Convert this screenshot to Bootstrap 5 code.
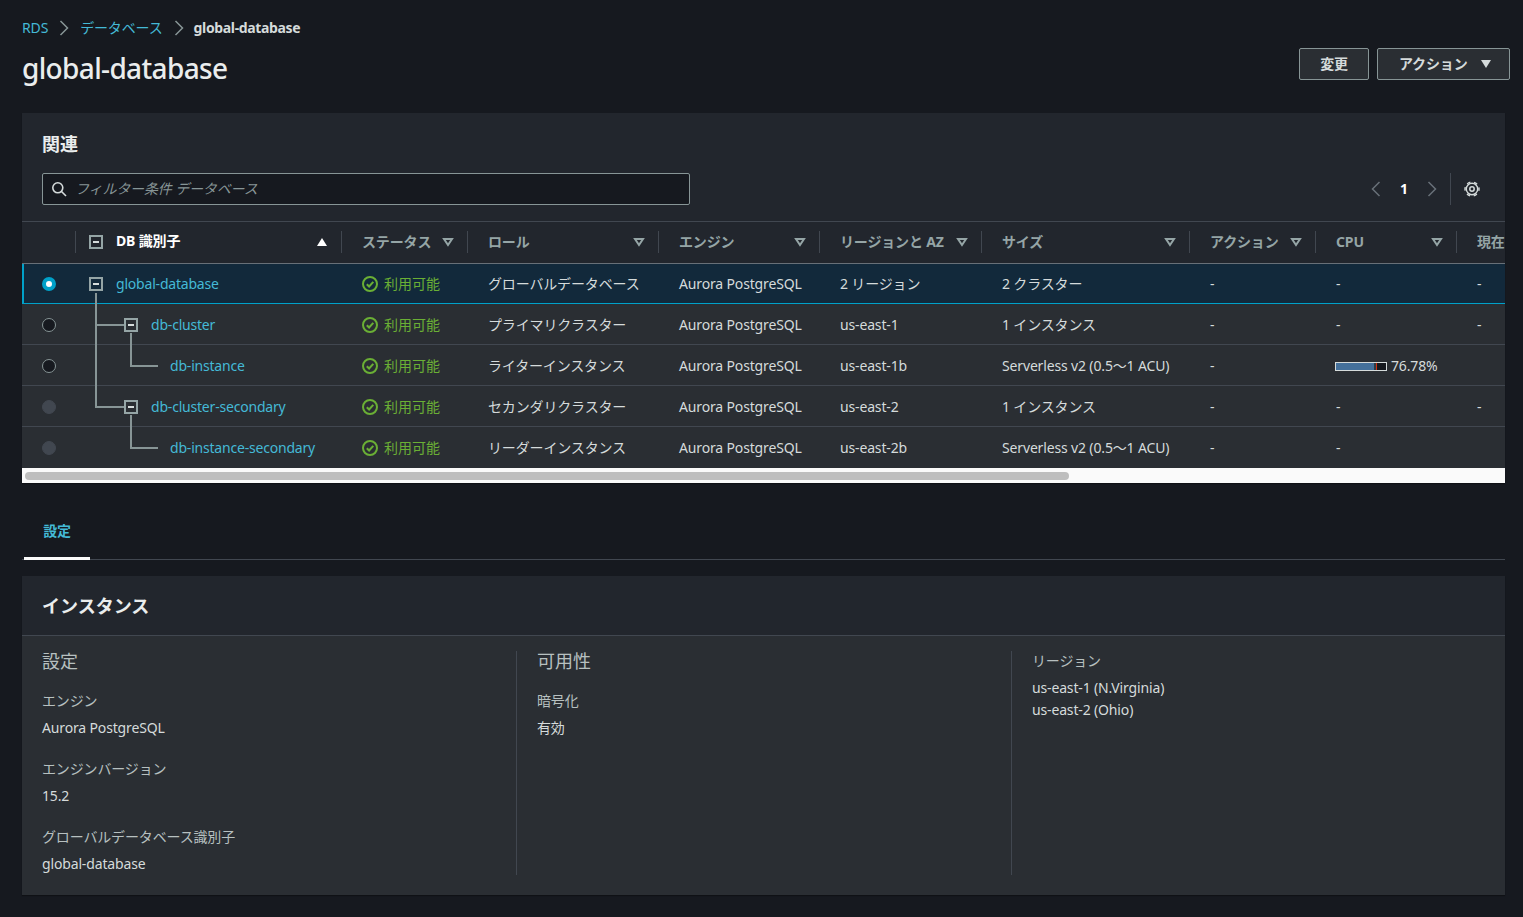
<!DOCTYPE html>
<html lang="ja">
<head>
<meta charset="utf-8">
<title>global-database</title>
<link href="https://cdn.jsdelivr.net/npm/bootstrap@5.3.0/dist/css/bootstrap.min.css" rel="stylesheet">
<style>
html,body{height:100%}
body{background:#16191f;color:#d5dbdb;font-family:"Noto Sans","Noto Sans CJK JP",sans-serif;font-size:14px;line-height:22px;letter-spacing:-.15px;overflow:hidden}
a{color:#44b9d6;text-decoration:none}
.page-wrap{padding:17px 18px 22px 22px}
.crumbs{height:22px}
.crumbs svg{margin:0 11px 0 11px}
.crumb-now{font-weight:700;color:#d5dbdb;letter-spacing:-.35px;margin-left:-1px}
.page-title{font-size:28px;line-height:36px;font-weight:500;letter-spacing:-.65px;color:#eaeded;margin:11px 0 0}
.head-row{margin-right:-5px;height:74px}
.head-btns{gap:8px;margin-top:9px}
.aws-btn{background:#2a2e33;border:1px solid #879596;color:#d5dbdb;font-weight:700;font-size:14px;line-height:22px;height:32px;border-radius:2px;padding:4px 20.5px;letter-spacing:-.15px}
.aws-btn:hover{background:#2a2e33;color:#d5dbdb;border-color:#879596}
.btn-caret{margin-left:11px;margin-right:-4px}
.rel-card{background:#22262d;box-shadow:0 1px 1px rgba(0,0,0,.3)}
.rel-head{padding:20px 20px 16px 20px}
.rel-title{font-size:18px;line-height:22px;font-weight:700;color:#eaeded;margin:0 0 18px;letter-spacing:0}
.filter-box{width:648px;height:32px;border:1px solid #879596;border-radius:2px;background:#16191f;padding-left:8px;gap:8px}
.filter-hint{font-style:italic;color:#879596}
.pager{height:32px;padding-right:5px}
.pager-num{font-weight:700;color:#fff;width:46px;text-align:center}
.pager-sep{width:1px;height:32px;background:#414750;margin:0 13px 0 13px}
.scroll-clip{overflow:hidden;border-top:1px solid #414750}
.res-table{table-layout:fixed;width:1550px;margin:0;border-collapse:collapse;--bs-table-bg:transparent;--bs-table-color:#d5dbdb}
.res-table th{height:41px;padding:0;font-weight:700;color:#95a5a6;background:#22262d;border-bottom:1px solid #687078;vertical-align:middle;white-space:nowrap}
.col-head{height:22px;border-left:1px solid #414750;padding-left:20px;padding-right:13px}
.col-head.act{color:#fff}
.act-label{padding-bottom:2px}
.res-table td{height:41px;padding:2px 0 0 21px;background:#2a2e33;color:#d5dbdb;border-bottom:1px solid #414750;vertical-align:middle;white-space:nowrap;position:relative}
.res-table tr:last-child td{border-bottom:0;height:42px;padding-top:1px}
.res-table tr.picked td{background:#12293b;border-top:1px solid #00a1c9;border-bottom:1px solid #00a1c9;height:40px}
.res-table tr.picked td:first-child{box-shadow:inset 2px 0 0 #00a1c9}
.res-table td.radio-cell{padding-left:20px}
.radio-dot{display:block;width:14px;height:14px;border-radius:50%;border:1px solid #879596;background:#16191f}
.radio-dot.on{background:#fff;border:4px solid #00a1c9}
.radio-dot.off{background:#414750;border-color:#414750}
.res-table td.tree-cell{padding-left:0}
.tree-lines{position:absolute;left:0;top:0;pointer-events:none}
.tree-in{display:flex;align-items:center;position:relative;letter-spacing:-.2px}
.lvl-0{padding-left:14px}.lvl-1{padding-left:49px}.lvl-2{padding-left:95px}
.tree-box{width:14px;height:14px;border:2px solid #95a5a6;flex:none;margin-right:13px;display:flex;align-items:center;justify-content:center}
.tree-box::before{content:"";width:6px;height:2px;background:#d5dbdb}
.head-box{margin-left:-7px}
.status-ok{color:#6aaf35;letter-spacing:0}
.status-ok svg{margin-right:6px;vertical-align:-3px}
.res-table td.cpu-td{padding-left:20px}
.cpu-bar{display:inline-block;width:52px;height:9px;border:1px solid #d5dbdb;position:relative;margin-right:4px;background:#16191f}
.cpu-fill{position:absolute;left:0;top:0;bottom:0;background:#44709b}
.cpu-mark{position:absolute;top:0;bottom:0;left:38px;width:3px;background:#2f3b46;border-right:1px solid #d13212}
.hscroll{height:15px;background:#fafafa;padding:4px 3px}
.hscroll-thumb{width:1044px;height:8px;background:#bebebe;border-radius:4px}
.tab-strip{margin-top:27px;height:50px;border-bottom:1px solid #414750}
.tab-one{display:block;width:66px;height:47px;margin-left:2px;text-align:center;line-height:42px;font-weight:700;color:#44b9d6;border-bottom:3px solid #fafafa;box-sizing:content-box}
.inst-card{margin-top:16px;background:#2a2e33;box-shadow:0 1px 1px rgba(0,0,0,.3)}
.inst-head{background:#22262d;height:60px;padding:0 20px;border-bottom:1px solid #414750;display:flex;align-items:center}
.inst-title{font-size:18px;font-weight:700;line-height:22px;color:#eaeded;margin:0;letter-spacing:0}
.inst-body{padding:15px 0 20px;height:259px}
.inst-col{width:495px;height:224px;padding:0 20px;border-right:1px solid #414750;flex:none}
.inst-col:last-child{border-right:0}
.inst-h{font-size:18px;line-height:22px;font-weight:400;margin:-1px 0 18px;color:#b7c0c0;letter-spacing:0}
.kv-l{color:#b7c0c0;line-height:22px}
.kv-v{color:#d5dbdb;line-height:22px;margin-top:5px;margin-bottom:19px}
.reg-h{color:#b7c0c0;line-height:22px;margin:-1px 0 5px}
</style>
</head>
<body>
<div class="page-wrap">
  <nav class="crumbs d-flex align-items-center">
    <a href="#">RDS</a>
    <svg width="10" height="16" viewBox="0 0 10 16" fill="none" stroke="#879596" stroke-width="1.5"><path d="M1.5 1l7 7-7 7"/></svg>
    <a href="#">データベース</a>
    <svg width="10" height="16" viewBox="0 0 10 16" fill="none" stroke="#879596" stroke-width="1.5"><path d="M1.5 1l7 7-7 7"/></svg>
    <span class="crumb-now">global-database</span>
  </nav>
  <div class="head-row d-flex justify-content-between align-items-start">
    <h1 class="page-title">global-database</h1>
    <div class="head-btns d-flex">
      <button class="btn aws-btn" type="button">変更</button>
      <button class="btn aws-btn d-flex align-items-center" type="button">アクション<svg class="btn-caret" width="14" height="10" viewBox="0 0 14 10"><path d="M2 1h10L7 9z" fill="#d5dbdb"/></svg></button>
    </div>
  </div>

  <section class="rel-card">
    <div class="rel-head">
      <h2 class="rel-title">関連</h2>
      <div class="d-flex justify-content-between align-items-center">
        <div class="filter-box d-flex align-items-center">
          <svg width="16" height="16" viewBox="0 0 16 16" fill="none" stroke="#d5dbdb" stroke-width="1.6"><circle cx="6.8" cy="6.8" r="5"/><path d="M10.5 10.5l4.5 4.5"/></svg>
          <span class="filter-hint">フィルター条件 データベース</span>
        </div>
        <div class="pager d-flex align-items-center">
          <svg width="10" height="16" viewBox="0 0 10 16" fill="none" stroke="#687078" stroke-width="1.5"><path d="M8.5 1l-7 7 7 7"/></svg>
          <span class="pager-num">1</span>
          <svg width="10" height="16" viewBox="0 0 10 16" fill="none" stroke="#687078" stroke-width="1.5"><path d="M1.5 1l7 7-7 7"/></svg>
          <span class="pager-sep"></span>
          <svg width="16" height="16" viewBox="0 0 16 16" fill="none" stroke="#d5dbdb"><circle cx="8" cy="8" r="2.2" stroke-width="1.5"/><circle cx="8" cy="8" r="5.7" stroke-width="1.4"/><circle cx="8" cy="8" r="7" stroke-width="1.4" stroke-dasharray="3.6 3.73" stroke-dashoffset="1.8"/></svg>
        </div>
      </div>
    </div>
    <div class="scroll-clip">
      <table class="table res-table">
        <colgroup><col style="width:53px"><col style="width:266px"><col style="width:126px"><col style="width:191px"><col style="width:161px"><col style="width:162px"><col style="width:208px"><col style="width:126px"><col style="width:141px"><col style="width:116px"></colgroup>
        <thead><tr>
          <th></th>
          <th><div class="col-head act d-flex align-items-center"><span class="tree-box head-box"></span><span class="flex-grow-1 act-label">DB 識別子</span><svg width="12" height="10" viewBox="0 0 12 10"><path d="M6 1l5 8H1z" fill="#fff"/></svg></div></th>
          <th><div class="col-head d-flex align-items-center justify-content-between"><span>ステータス</span><svg width="12" height="10" viewBox="0 0 12 10" fill="none" stroke="#95a5a6" stroke-width="2"><path d="M2 2h8L6 8z"/></svg></div></th>
          <th><div class="col-head d-flex align-items-center justify-content-between"><span>ロール</span><svg width="12" height="10" viewBox="0 0 12 10" fill="none" stroke="#95a5a6" stroke-width="2"><path d="M2 2h8L6 8z"/></svg></div></th>
          <th><div class="col-head d-flex align-items-center justify-content-between"><span>エンジン</span><svg width="12" height="10" viewBox="0 0 12 10" fill="none" stroke="#95a5a6" stroke-width="2"><path d="M2 2h8L6 8z"/></svg></div></th>
          <th><div class="col-head d-flex align-items-center justify-content-between"><span>リージョンと AZ</span><svg width="12" height="10" viewBox="0 0 12 10" fill="none" stroke="#95a5a6" stroke-width="2"><path d="M2 2h8L6 8z"/></svg></div></th>
          <th><div class="col-head d-flex align-items-center justify-content-between"><span>サイズ</span><svg width="12" height="10" viewBox="0 0 12 10" fill="none" stroke="#95a5a6" stroke-width="2"><path d="M2 2h8L6 8z"/></svg></div></th>
          <th><div class="col-head d-flex align-items-center justify-content-between"><span>アクション</span><svg width="12" height="10" viewBox="0 0 12 10" fill="none" stroke="#95a5a6" stroke-width="2"><path d="M2 2h8L6 8z"/></svg></div></th>
          <th><div class="col-head d-flex align-items-center justify-content-between"><span>CPU</span><svg width="12" height="10" viewBox="0 0 12 10" fill="none" stroke="#95a5a6" stroke-width="2"><path d="M2 2h8L6 8z"/></svg></div></th>
          <th><div class="col-head d-flex align-items-center"><span>現在</span></div></th>
        </tr></thead>
        <tbody>
          <tr class="picked">
            <td class="radio-cell"><span class="radio-dot on"></span></td>
            <td class="tree-cell"><svg class="tree-lines" width="120" height="41" fill="none" stroke="#879596" stroke-width="2"><path d="M21 29v13"/></svg><div class="tree-in lvl-0"><span class="tree-box"></span><a href="#">global-database</a></div></td>
            <td><span class="status-ok"><svg width="16" height="16" viewBox="0 0 16 16" fill="none" stroke="#6aaf35" stroke-width="2"><circle cx="8" cy="8" r="7"/><path d="M4.800 8.200l2.300 2.300 4.200-4.600"/></svg>利用可能</span></td>
            <td>グローバルデータベース</td><td>Aurora PostgreSQL</td><td>2 リージョン</td><td>2 クラスター</td><td>-</td><td>-</td><td>-</td>
          </tr>
          <tr>
            <td class="radio-cell"><span class="radio-dot"></span></td>
            <td class="tree-cell"><svg class="tree-lines" width="120" height="41" fill="none" stroke="#879596" stroke-width="2"><path d="M21 0v41M21 21h28M56 29v12"/></svg><div class="tree-in lvl-1"><span class="tree-box"></span><a href="#">db-cluster</a></div></td>
            <td><span class="status-ok"><svg width="16" height="16" viewBox="0 0 16 16" fill="none" stroke="#6aaf35" stroke-width="2"><circle cx="8" cy="8" r="7"/><path d="M4.800 8.200l2.300 2.300 4.200-4.600"/></svg>利用可能</span></td>
            <td>プライマリクラスター</td><td>Aurora PostgreSQL</td><td>us-east-1</td><td>1 インスタンス</td><td>-</td><td>-</td><td>-</td>
          </tr>
          <tr>
            <td class="radio-cell"><span class="radio-dot"></span></td>
            <td class="tree-cell"><svg class="tree-lines" width="120" height="41" fill="none" stroke="#879596" stroke-width="2"><path d="M21 0v41M56 0v21h27"/></svg><div class="tree-in lvl-2"><a href="#">db-instance</a></div></td>
            <td><span class="status-ok"><svg width="16" height="16" viewBox="0 0 16 16" fill="none" stroke="#6aaf35" stroke-width="2"><circle cx="8" cy="8" r="7"/><path d="M4.800 8.200l2.300 2.300 4.200-4.600"/></svg>利用可能</span></td>
            <td>ライターインスタンス</td><td>Aurora PostgreSQL</td><td>us-east-1b</td><td>Serverless v2 (0.5～1 ACU)</td><td>-</td><td class="cpu-td"><span class="cpu-bar"><span class="cpu-fill" style="width:76.78%"></span><span class="cpu-mark"></span></span>76.78%</td><td></td>
          </tr>
          <tr>
            <td class="radio-cell"><span class="radio-dot off"></span></td>
            <td class="tree-cell"><svg class="tree-lines" width="120" height="41" fill="none" stroke="#879596" stroke-width="2"><path d="M21 0v21h28M56 29v12"/></svg><div class="tree-in lvl-1"><span class="tree-box"></span><a href="#">db-cluster-secondary</a></div></td>
            <td><span class="status-ok"><svg width="16" height="16" viewBox="0 0 16 16" fill="none" stroke="#6aaf35" stroke-width="2"><circle cx="8" cy="8" r="7"/><path d="M4.800 8.200l2.300 2.300 4.200-4.600"/></svg>利用可能</span></td>
            <td>セカンダリクラスター</td><td>Aurora PostgreSQL</td><td>us-east-2</td><td>1 インスタンス</td><td>-</td><td>-</td><td>-</td>
          </tr>
          <tr>
            <td class="radio-cell"><span class="radio-dot off"></span></td>
            <td class="tree-cell"><svg class="tree-lines" width="120" height="41" fill="none" stroke="#879596" stroke-width="2"><path d="M56 0v21h27"/></svg><div class="tree-in lvl-2"><a href="#">db-instance-secondary</a></div></td>
            <td><span class="status-ok"><svg width="16" height="16" viewBox="0 0 16 16" fill="none" stroke="#6aaf35" stroke-width="2"><circle cx="8" cy="8" r="7"/><path d="M4.800 8.200l2.300 2.300 4.200-4.600"/></svg>利用可能</span></td>
            <td>リーダーインスタンス</td><td>Aurora PostgreSQL</td><td>us-east-2b</td><td>Serverless v2 (0.5～1 ACU)</td><td>-</td><td>-</td><td></td>
          </tr>
        </tbody>
      </table>
    </div>
    <div class="hscroll"><div class="hscroll-thumb"></div></div>
  </section>

  <div class="tab-strip"><a class="tab-one" href="#">設定</a></div>

  <section class="inst-card">
    <div class="inst-head"><h2 class="inst-title">インスタンス</h2></div>
    <div class="inst-body d-flex">
      <div class="inst-col">
        <h3 class="inst-h">設定</h3>
        <div class="kv-l">エンジン</div><div class="kv-v">Aurora PostgreSQL</div>
        <div class="kv-l">エンジンバージョン</div><div class="kv-v">15.2</div>
        <div class="kv-l">グローバルデータベース識別子</div><div class="kv-v">global-database</div>
      </div>
      <div class="inst-col">
        <h3 class="inst-h">可用性</h3>
        <div class="kv-l">暗号化</div><div class="kv-v">有効</div>
      </div>
      <div class="inst-col">
        <div class="reg-h">リージョン</div>
        <div>us-east-1 (N.Virginia)</div>
        <div>us-east-2 (Ohio)</div>
      </div>
    </div>
  </section>
</div>
<script src="https://cdn.jsdelivr.net/npm/bootstrap@5.3.0/dist/js/bootstrap.bundle.min.js"></script>
</body>
</html>
